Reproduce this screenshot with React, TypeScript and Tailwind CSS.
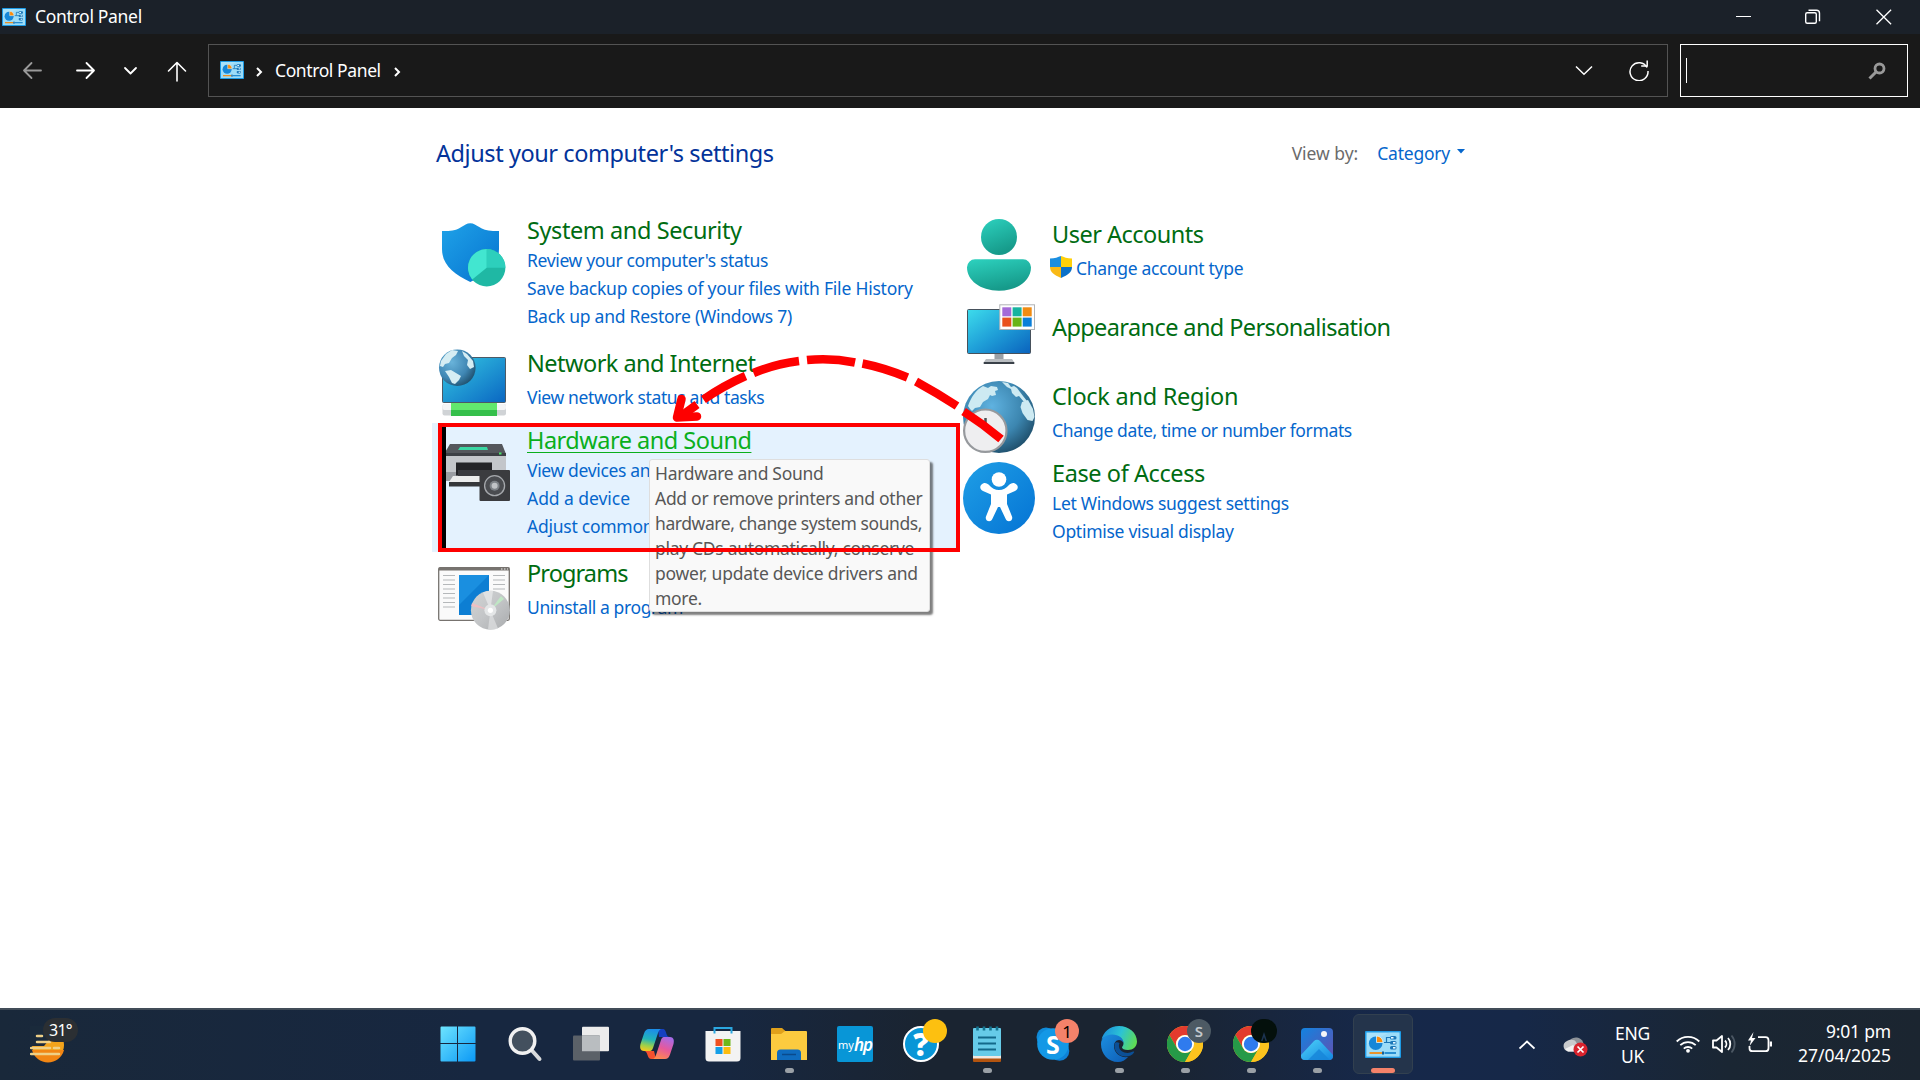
import React from 'react';
import clsx from 'clsx';

interface IconProps {
  className?: string;
}

interface Link {
  label: string;
  className: string;
  shield?: boolean;
}

interface Category {
  title: string;
  titleClass: string;
  icon: React.FC<IconProps>;
  rowClass: string;
  iconClass: string;
  textClass: string;
  linksClass: string;
  links: Link[];
  hovered?: boolean;
}

/* ---------- Icons ---------- */

const ControlPanelIcon: React.FC<IconProps> = ({ className }) => (
  <svg viewBox="0 0 36 27" className={className}>
    <rect width="36" height="27" rx="1" fill="#1d9be6" />
    <rect x="1.5" y="1.5" width="33" height="24" fill="#a9e2fa" />
    <path d="M1.5 25.5V14L24 1.5h10.500V25.500z" fill="#8fd6f6" opacity=".5" />
    <circle cx="10.700" cy="12.300" r="6.800" fill="#1787d8" />
    <path d="M11.500 11.500V5a6.500 6.500 0 0 1 6.500 6.500z" fill="#fb8c0b" stroke="#d9f2fd" strokeWidth=".8" />
    <path d="M19 11.500h2.500V6.500H26M21.500 11.500H26" stroke="#1b77b8" strokeWidth="1.200" fill="none" />
    <rect x="25" y="5" width="6.500" height="3.600" rx="1.600" fill="#1b77b8" />
    <rect x="25" y="10" width="6.500" height="3.600" rx="1.600" fill="#1b77b8" />
    <rect x="25" y="15" width="6.500" height="3.600" rx="1.600" fill="#1b77b8" />
    <rect x="26" y="6" width="2.500" height="1.600" fill="#e8f8ff" />
    <rect x="28" y="11" width="2.500" height="1.600" fill="#e8f8ff" />
    <rect x="28" y="16" width="2.500" height="1.600" fill="#e8f8ff" />
    <path d="M4.500 22H17" stroke="#f28a12" strokeWidth="1.800" />
    <path d="M19.500 22H31" stroke="#1b86cf" strokeWidth="1.800" />
    <rect x="17" y="20.500" width="2" height="3" fill="#0f5f9c" />
  </svg>
);

const SecurityIcon: React.FC<IconProps> = ({ className }) => (
  <svg viewBox="0 0 72 72" className={className}>
    <defs>
      <linearGradient id="shieldBlue" x1="0" y1="0" x2="1" y2="1">
        <stop offset="0" stopColor="#1fa2e8" />
        <stop offset="1" stopColor="#0672cf" />
      </linearGradient>
    </defs>
    <path d="M32.300 4.300c-7 0-9.500 7.700-22 7.700H4v18c0 16 12 25 28.300 33C49 55 61 46 61 30V12h-6c-13 0-16-7.700-22.700-7.700z" fill="url(#shieldBlue)" />
    <circle cx="48.700" cy="48.700" r="18.700" fill="#1fb8a4" />
    <path d="M48.700 48.700V30a18.700 18.700 0 0 1 18.700 18.700z" fill="#2dcfbc" />
    <path d="M48.700 48.700V30a18.700 18.700 0 0 0-14.500 30.500z" fill="#42e6d0" />
  </svg>
);

const Continents: React.FC = () => (
  <g fill="#cdeaf2">
    <path d="M5 25C8 16 13 9 20 5l5 2 3-2 6 1 1 3-3 1 1 4-4 1-2-1-2 4-5 3-3 5-5 1-3 3-2-2z" />
    <path d="M9 32l4-1 1 2-3 2z" />
    <path d="M39 1l6 1 3 4 3-1 3 2 6 8 4 5-3 1-5-6-3 1-4-4-1-4-4-2z" />
    <path d="M59 21l6-2 5 9 1.500 8-2 4-5-1-5-7-2-6z" />
  </g>
);

const NetworkIcon: React.FC<IconProps> = ({ className }) => (
  <svg viewBox="0 0 72 72" className={className}>
    <defs>
      <linearGradient id="screenBlue" x1="0" y1="0" x2="1" y2="1">
        <stop offset="0" stopColor="#35c9e3" />
        <stop offset="1" stopColor="#0a66c2" />
      </linearGradient>
      <radialGradient id="globeSmall" cx=".35" cy=".35" r=".75">
        <stop offset="0" stopColor="#69b3da" />
        <stop offset=".6" stopColor="#3f86b3" />
        <stop offset="1" stopColor="#1c4a66" />
      </radialGradient>
    </defs>
    <rect x="4.500" y="10.500" width="63" height="45" rx="1" fill="url(#screenBlue)" stroke="#4d5a66" />
    <rect x="4.500" y="57" width="63.500" height="11.500" rx="2" fill="#d0d3d6" />
    <rect x="4.500" y="57" width="63.500" height="6" rx="2" fill="#f4f5f6" />
    <rect x="13" y="56" width="46" height="13" fill="#35bf4b" />
    <rect x="13" y="56" width="46" height="7" fill="#62e86e" />
    <circle cx="19.300" cy="20.700" r="18.300" fill="url(#globeSmall)" />
    <g fill="#d5edf3">
      <path d="M3 14l5-7 6-4 6 1-2 4-4 3-3 5-4 1-2 3-3-1z" />
      <path d="M7 24l6-1 5 3 5 3-2 4-4 4-3-1-3-6z" />
      <path d="M24 4l5 3 6 7 1 6-4 2-3-4 1-5-4-4z" />
    </g>
  </svg>
);

const PrinterIcon: React.FC<IconProps> = ({ className }) => (
  <svg viewBox="0 0 72 72" className={className}>
    <path d="M12 8h52l4 10v2H6v-2z" fill="#54575c" />
    <path d="M22 11h27l1 3H20z" fill="#3ad6a3" />
    <path d="M6 17h62v3H6z" fill="#3d4045" />
    <rect x="61" y="16.500" width="2.500" height="2" fill="#4ae26a" />
    <path d="M6 20h62v23a2 2 0 0 1-2 2H8a2 2 0 0 1-2-2z" fill="#c3c6ca" />
    <path d="M6 36h62v9H6z" fill="#9a9da2" />
    <rect x="18" y="26.500" width="36" height="13" fill="#232427" />
    <rect x="20" y="34" width="32" height="6" fill="#3a3b3f" />
    <path d="M15 40h35v6H11z" fill="#eceded" />
    <rect x="11" y="46" width="32" height="4.500" fill="#35373a" />
    <rect x="41.500" y="34" width="30.500" height="31" rx="1" fill="#3b3c3f" />
    <circle cx="56.600" cy="49.700" r="10" fill="#4a4c50" stroke="#a5a8ac" strokeWidth="1.300" />
    <circle cx="56.600" cy="49.700" r="5" fill="#7d8287" />
    <circle cx="56.600" cy="49.700" r="3" fill="#c0c3c6" />
  </svg>
);

const ProgramsIcon: React.FC<IconProps> = ({ className }) => (
  <svg viewBox="0 0 72 72" className={className}>
    <defs>
      <linearGradient id="disc" x1="0" y1="0" x2="1" y2="1">
        <stop offset="0" stopColor="#d2d4d5" />
        <stop offset=".5" stopColor="#c3c5c7" />
        <stop offset="1" stopColor="#a9abad" />
      </linearGradient>
    </defs>
    <rect x=".7" y="5.700" width="70.600" height="52.600" rx="1.500" fill="#fafafa" stroke="#77736f" strokeWidth="1.300" />
    <path d="M.7 7h70.600" stroke="#77736f" strokeWidth="3" />
    <path d="M63 7h1.500M66 7h1.500M69 7h1" stroke="#eee" strokeWidth="1.200" />
    <path
      d="M5 13.500h12M5 18h12M5 22.500h12M5 27h12M5 31.500h12M5 36h12M5 40.500h12M5 45h12M55 13.500h12M55 18h12M55 22.500h12M55 27h12"
      stroke="#b5b8ba"
    />
    <rect x="21" y="13" width="30" height="40" fill="#0d7ed3" />
    <path d="M21 13h30L21 43z" fill="#1a8fe0" />
    <circle cx="52.400" cy="48.300" r="19.500" fill="url(#disc)" />
    <path d="M52.400 48.300L34 41l-.8 3z" fill="#eebfc3" />
    <path d="M52.400 48.300L63 34l3 3z" fill="#bfe6c4" />
    <path d="M52.400 48.300L45 30.500a19.500 19.500 0 0 1 10-1.500z" fill="#e6e7e8" opacity=".8" />
    <path d="M52.400 48.300L50 67.500a19.500 19.500 0 0 0 10-1z" fill="#e0e1e2" opacity=".7" />
    <circle cx="52.400" cy="48.300" r="6" fill="#e4e6e7" />
    <circle cx="52.400" cy="48.300" r="2.600" fill="#fff" />
  </svg>
);

const UserIcon: React.FC<IconProps> = ({ className }) => (
  <svg viewBox="0 0 72 72" className={className}>
    <defs>
      <linearGradient id="userTeal" x1="0" y1="0" x2=".4" y2="1">
        <stop offset="0" stopColor="#2dd2bf" />
        <stop offset="1" stopColor="#169a8a" />
      </linearGradient>
    </defs>
    <circle cx="36" cy="18" r="18" fill="url(#userTeal)" />
    <path d="M12 40.300h48a8 8 0 0 1 8 8c0 13-13 23.400-32 23.400S4 61.300 4 48.300a8 8 0 0 1 8-8z" fill="url(#userTeal)" />
  </svg>
);

const AppearanceIcon: React.FC<IconProps> = ({ className }) => (
  <svg viewBox="0 0 72 72" className={className}>
    <defs>
      <linearGradient id="screenCyan" x1="0" y1="0" x2="1" y2="1">
        <stop offset="0" stopColor="#3ddcec" />
        <stop offset=".5" stopColor="#1f9fd8" />
        <stop offset="1" stopColor="#0a62bd" />
      </linearGradient>
    </defs>
    <rect x="31.500" y="56" width="9" height="7" fill="#9aa0a6" />
    <path d="M23 61h26l2 3H21z" fill="#b9bdc1" />
    <rect x="20.700" y="64" width="30.600" height="2" fill="#3a4149" />
    <rect x="4.500" y="11.500" width="63" height="44" rx="1" fill="url(#screenCyan)" stroke="#46515c" />
    <rect x="36.800" y="6.800" width="34.700" height="24.700" fill="#fff" stroke="#b0b3b6" />
    <rect x="39.300" y="9.300" width="9" height="9" fill="#a46ad8" />
    <rect x="49.600" y="9.300" width="9" height="9" fill="#17b3a0" />
    <rect x="59.700" y="9.300" width="9" height="9" fill="#f08b12" />
    <rect x="39.300" y="19.600" width="9" height="9" fill="#e9511d" />
    <rect x="49.600" y="19.600" width="9" height="9" fill="#69b418" />
    <rect x="59.700" y="19.600" width="9" height="9" fill="#0a7fd9" />
  </svg>
);

const ClockIcon: React.FC<IconProps> = ({ className }) => (
  <svg viewBox="0 0 72 72" className={className}>
    <defs>
      <radialGradient id="globeLarge" cx=".4" cy=".35" r=".7">
        <stop offset="0" stopColor="#5fb2e0" />
        <stop offset=".6" stopColor="#3c86b0" />
        <stop offset="1" stopColor="#1d4c68" />
      </radialGradient>
    </defs>
    <circle cx="36" cy="36" r="36" fill="url(#globeLarge)" />
    <Continents />
    <circle cx="22.300" cy="49.700" r="21.200" fill="#eeeef0" stroke="#96999d" strokeWidth="2.200" />
    <path d="M22.500 37v12" stroke="#4c4f52" strokeWidth="2.500" />
  </svg>
);

const EaseIcon: React.FC<IconProps> = ({ className }) => (
  <svg viewBox="0 0 72 72" className={className}>
    <defs>
      <linearGradient id="easeBlue" x1="0" y1="0" x2="1" y2="1">
        <stop offset="0" stopColor="#1f9fe6" />
        <stop offset="1" stopColor="#0473d4" />
      </linearGradient>
    </defs>
    <circle cx="36" cy="36" r="36" fill="url(#easeBlue)" />
    <circle cx="36" cy="17.500" r="7.300" fill="#fff" />
    <path
      d="M20.500 21.200c2-.8 3.500.300 5 1.200C29 26 32 28 36 28s7-2 10.500-5.600c1.500-.9 3-2 5-1.200 4 1.500 4.500 6 .5 7.800L44 32.500V42l5 12.500c1.600 4.200-4.400 6.700-6.300 2.500L37 45h-2l-5.700 12c-1.900 4.200-7.900 1.700-6.300-2.500L28 42v-9.500L20 29c-4-1.800-3.500-6.300.5-7.800z"
      fill="#fff"
    />
  </svg>
);

const UacShield: React.FC<IconProps> = ({ className }) => (
  <svg viewBox="0 0 22 22" className={className}>
    <path d="M11 0v11H0V2.500C5 2.500 8 1 11 0z" fill="#1b8ee0" />
    <path d="M11 0v11h11V2.500C17 2.500 14 1 11 0z" fill="#ffd00a" />
    <path d="M0 11h11v11C4 19 0 16 0 11z" fill="#f9b916" />
    <path d="M22 11H11v11c7-3 11-6 11-11z" fill="#0c71c9" />
  </svg>
);

/* ---------- Data ---------- */

const leftColumn: Category[] = [
  {
    title: 'System and Security',
    titleClass: 'tracking-[-0.41px]',
    icon: SecurityIcon,
    rowClass: 'h-[133px]',
    iconClass: 'mt-1.5',
    textClass: 'mt-px',
    linksClass: '-mt-px',
    links: [
      { label: "Review your computer's status", className: 'tracking-[-0.35px]' },
      { label: 'Save backup copies of your files with File History', className: 'tracking-[-0.22px]' },
      { label: 'Back up and Restore (Windows 7)', className: 'tracking-[-0.25px]' },
    ],
  },
  {
    title: 'Network and Internet',
    titleClass: 'tracking-[-0.53px]',
    icon: NetworkIcon,
    rowClass: 'h-[77px]',
    iconClass: 'mt-px',
    textClass: 'mt-px',
    linksClass: 'mt-[3px]',
    links: [{ label: 'View network status and tasks', className: 'tracking-[-0.37px]' }],
  },
  {
    title: 'Hardware and Sound',
    titleClass: 'tracking-[-0.5px]',
    icon: PrinterIcon,
    rowClass: 'h-[129px] mb-1',
    iconClass: 'mt-[13px]',
    textClass: 'mt-px',
    linksClass: '-mt-px',
    hovered: true,
    links: [
      { label: 'View devices and printers', className: 'tracking-[-0.35px]' },
      { label: 'Add a device', className: 'tracking-[-0.05px]' },
      { label: 'Adjust commonly used mobility settings', className: 'tracking-[-0.25px]' },
    ],
  },
  {
    title: 'Programs',
    titleClass: 'tracking-[-0.9px]',
    icon: ProgramsIcon,
    rowClass: '',
    iconClass: 'mt-1.5',
    textClass: 'mt-px',
    linksClass: 'mt-[3px]',
    links: [{ label: 'Uninstall a program', className: 'tracking-[-0.4px]' }],
  },
];

const rightColumn: Category[] = [
  {
    title: 'User Accounts',
    titleClass: 'tracking-[-0.5px]',
    icon: UserIcon,
    rowClass: 'h-[81px] mt-1',
    iconClass: 'mt-0.5',
    textClass: 'mt-px',
    linksClass: 'mt-[3px]',
    links: [{ label: 'Change account type', className: 'tracking-[-0.32px]', shield: true }],
  },
  {
    title: 'Appearance and Personalisation',
    titleClass: 'tracking-[-0.6px]',
    icon: AppearanceIcon,
    rowClass: 'h-[81px]',
    iconClass: '',
    textClass: 'mt-[13px]',
    linksClass: '',
    links: [],
  },
  {
    title: 'Clock and Region',
    titleClass: 'tracking-[-0.26px]',
    icon: ClockIcon,
    rowClass: 'h-[77px]',
    iconClass: 'mt-0.5',
    textClass: 'mt-px',
    linksClass: 'mt-[3px]',
    links: [{ label: 'Change date, time or number formats', className: 'tracking-[-0.37px]' }],
  },
  {
    title: 'Ease of Access',
    titleClass: 'tracking-[-0.41px]',
    icon: EaseIcon,
    rowClass: '',
    iconClass: 'mt-1.5',
    textClass: 'mt-px',
    linksClass: '-mt-px',
    links: [
      { label: 'Let Windows suggest settings', className: 'tracking-[-0.27px]' },
      { label: 'Optimise visual display', className: 'tracking-[-0.28px]' },
    ],
  },
];

/* ---------- Window ---------- */

const TitleBar: React.FC = () => (
  <div className="flex h-[34px] items-center bg-[#1b2129] pl-0.5 text-white">
    <ControlPanelIcon className="h-[18px] w-6" />
    <span className="ml-[9px] text-[17.5px] leading-none tracking-[-0.31px]">Control Panel</span>
    <div className="ml-auto flex items-center">
      <svg viewBox="0 0 156 16" className="mr-[28px] h-4 w-[156px]" fill="none" stroke="#fff">
        <path d="M0 7.500h15" />
        <rect x="69.700" y="3.700" width="10.600" height="10.600" rx="1.500" strokeWidth="1.400" />
        <path d="M72.500 1.200h8a3 3 0 0 1 3 3v8" strokeWidth="1.400" />
        <path d="M140.500.7l14.600 14.600M155.100.7l-14.600 14.600" strokeWidth="1.300" />
      </svg>
    </div>
  </div>
);

const AddressBar: React.FC = () => (
  <div className="flex h-[74px] items-start bg-[#191919] pr-3">
    <svg viewBox="0 0 208 74" className="h-[74px] w-[208px]" fill="none" strokeLinecap="round" strokeLinejoin="round">
      <path d="M41 36.500H24M31.500 29l-7.500 7.500 7.500 7.500" stroke="#9a9a9a" strokeWidth="1.800" />
      <path d="M77 36.500h17M86.500 29l7.500 7.500-7.500 7.500" stroke="#fff" strokeWidth="1.800" />
      <path d="M125 34l5.500 5.500L136 34" stroke="#fff" strokeWidth="1.800" />
      <path d="M177 47V29M168.500 37l8.500-8.500 8.500 8.500" stroke="#fff" strokeWidth="1.600" />
    </svg>
    <div className="mt-2.5 flex h-[53px] w-[1460px] items-center border border-[#535353] pl-[11px] pr-[18px] text-white">
      <ControlPanelIcon className="-mt-px h-[18px] w-6" />
      <svg viewBox="0 0 7 10" className="ml-3 mt-0.5 h-2.5 w-[7px]" fill="none" stroke="#fff" strokeWidth="2">
        <path d="M1 1l4 4-4 4" />
      </svg>
      <span className="mt-px ml-[12px] text-[17.5px] leading-none tracking-[-0.4px]">Control Panel</span>
      <svg viewBox="0 0 7 10" className="ml-[13px] mt-0.5 h-2.5 w-[7px]" fill="none" stroke="#fff" strokeWidth="2">
        <path d="M1 1l4 4-4 4" />
      </svg>
      <svg viewBox="0 0 74 22" className="-mt-0.5 ml-auto h-[22px] w-[74px]" fill="none" stroke="#fff" strokeWidth="1.500">
        <path d="M1 7.500l8 7.700 8-7.700" />
        <path d="M72 8.500A9 9 0 1 0 73 12" />
        <path d="M72.200 1.500V7h-6" />
      </svg>
    </div>
    <div className="ml-3 mt-2.5 flex h-[53px] flex-1 items-center border border-white pl-[5px] pr-[21px]">
      <div className="h-[25px] w-px bg-white" />
      <svg viewBox="0 0 18 18" className="ml-auto mt-px h-[18px] w-[18px]" fill="none" stroke="#999">
        <circle cx="11.500" cy="6.500" r="4.500" strokeWidth="2.800" />
        <path d="M8 10l-6.500 6.500" strokeWidth="3" />
      </svg>
    </div>
  </div>
);

const CategoryRow: React.FC<{ category: Category }> = ({ category }) => {
  const Icon = category.icon;
  return (
    <div className={clsx('flex pl-1.5', category.rowClass, category.hovered && 'bg-[#e4f2fe]')}>
      <Icon className={clsx('h-[72px] w-[72px] shrink-0', category.iconClass)} />
      <div className={clsx('ml-[17px] whitespace-nowrap', category.textClass)}>
        <h2
          className={clsx(
            'text-[23.5px] leading-[33px]',
            category.titleClass,
            category.hovered ? 'text-[#0aaf1c] underline decoration-1 underline-offset-[3px]' : 'text-[#006c12]'
          )}
        >
          {category.title}
        </h2>
        <ul className={category.linksClass}>
          {category.links.map((link) => (
            <li key={link.label} className="flex h-7 items-center text-[17.5px] leading-7 text-[#0566cc]">
              {link.shield && <UacShield className="-ml-0.5 mr-[4px] -mt-0.5 h-[22px] w-[22px]" />}
              <span className={link.className}>{link.label}</span>
            </li>
          ))}
        </ul>
      </div>
    </div>
  );
};

const Tooltip: React.FC = () => (
  <div className="absolute left-[649px] top-[459px] h-[153px] w-[281px] whitespace-nowrap rounded-[3px] border border-[#dedede] bg-[#f9f9f9] pl-[5px] pt-px text-[17.5px] leading-[25px] tracking-[-0.3px] text-[#575757] shadow-[3px_3px_2px_rgba(0,0,0,0.5)]">
    <div>Hardware and Sound</div>
    <div className="tracking-[-0.29px]">Add or remove printers and other</div>
    <div className="tracking-[-0.42px]">hardware, change system sounds,</div>
    <div className="tracking-[-0.3px]">play CDs automatically, conserve</div>
    <div className="tracking-[-0.24px]">power, update device drivers and</div>
    <div>more.</div>
  </div>
);

// Red frame and dashed arrow drawn over the hovered category
const Annotation: React.FC = () => (
  <>
    <div className="absolute left-[438px] top-[423px] h-[129px] w-[522px] border-4 border-[#fe0000]">
      <div className="h-full w-1 bg-black" />
    </div>
    <svg viewBox="660 340 360 110" className="absolute left-[660px] top-[340px] h-[110px] w-[360px]" fill="none" stroke="#fe0000" strokeWidth="8.500">
      <path d="M1001 439Q983 424 963.600 411.500" />
      <path d="M957 406Q937 393 916 381.500" />
      <path d="M907.500 377.500Q885 368 862.500 363.500" />
      <path d="M855 362.500Q831 357.500 807 360" />
      <path d="M799 361Q775 364 753.500 373" />
      <path d="M745.500 376Q723 386 703.500 399.500" />
      <path d="M697 404.500L680 417" />
      <path d="M681.500 399L677 417.500 697 416.500" strokeLinecap="round" strokeLinejoin="round" />
    </svg>
  </>
);

const Content: React.FC = () => (
  <main className="h-[900px] bg-white pl-[432px]">
    <div className="flex h-[105px] items-start pt-[27px]">
      <h1 className="pl-1 text-[23.5px] leading-[36px] tracking-[-0.43px] text-[#03339a]">Adjust your computer&#39;s settings</h1>
      <div className="ml-auto mr-[455px] mt-1 flex items-center text-[17.5px] leading-7">
        <span className="tracking-[-0.03px] text-[#6b6b6b]">View by:</span>
        <span className="ml-[19px] tracking-[-0.23px] text-[#0566cc]">Category</span>
        <svg viewBox="0 0 8 5" className="-mt-1 ml-[7px] h-[5px] w-2">
          <path d="M0 0h8L4 4.500z" fill="#0566cc" />
        </svg>
      </div>
    </div>
    <div className="flex">
      <div className="w-[525px]">
        {leftColumn.map((c) => (
          <CategoryRow key={c.title} category={c} />
        ))}
      </div>
      <div className="w-[525px]">
        {rightColumn.map((c) => (
          <CategoryRow key={c.title} category={c} />
        ))}
      </div>
    </div>
  </main>
);

/* ---------- Taskbar ---------- */

const StartIcon: React.FC = () => (
  <svg viewBox="0 0 36 36" className="-ml-[3px] h-9 w-9">
    <defs>
      <linearGradient id="start" gradientUnits="userSpaceOnUse" x1="0" y1="0" x2="36" y2="36">
        <stop offset="0" stopColor="#6fe6ff" />
        <stop offset="1" stopColor="#0a97f5" />
      </linearGradient>
    </defs>
    <path d="M1.500.5H17V17H.5V1.500a1 1 0 0 1 1-1zM18 .5h16.500a1 1 0 0 1 1 1V17H18zM.5 18H17v17.500H1.500a1 1 0 0 1-1-1zM18 18h17.500v16.500a1 1 0 0 1-1 1H18z" fill="url(#start)" />
  </svg>
);

const SearchIcon: React.FC = () => (
  <svg viewBox="0 0 36 36" className="h-9 w-9">
    <path d="M24.500 24l8 9" stroke="#d8dadc" strokeWidth="4" strokeLinecap="round" />
    <circle cx="15.500" cy="15" r="12.300" fill="#43505e" stroke="#f1f1f1" strokeWidth="3.400" />
  </svg>
);

const TaskViewIcon: React.FC = () => (
  <svg viewBox="0 0 36 36" className="h-9 w-9">
    <rect x="9" y=".7" width="27" height="24.500" rx="1" fill="#ececec" />
    <rect x="0" y="9.500" width="27" height="25" rx="1" fill="#5b6168" />
    <path d="M9 9.500h17a1 1 0 0 1 1 1v14.700H9z" fill="#b9bdc0" />
  </svg>
);

const CopilotIcon: React.FC = () => (
  <svg viewBox="0 0 36 36" className="h-9 w-9">
    <defs>
      <linearGradient id="copA" x1=".4" y1="0" x2=".2" y2="1">
        <stop offset="0" stopColor="#1c8ee8" />
        <stop offset=".45" stopColor="#22b5b8" />
        <stop offset=".75" stopColor="#9ed04a" />
        <stop offset="1" stopColor="#fbc81b" />
      </linearGradient>
      <linearGradient id="copB" x1=".7" y1="0" x2=".3" y2="1">
        <stop offset="0" stopColor="#a66be8" />
        <stop offset=".5" stopColor="#e5599d" />
        <stop offset="1" stopColor="#ff8a4c" />
      </linearGradient>
    </defs>
    <path d="M19 3h4.500c2.500 0 3 1.500 4 5 .6 2 1.500 3 3.500 3H20z" fill="#1640c0" />
    <path d="M17 33h-4.500c-2.500 0-3-1.500-4-4-.6-2-1.500-4-3.500-4h10z" fill="#f4502e" />
    <path d="M10 3h13c-2.500 0-3.500 2-4.500 5.500L14 22c-.8 2.500-2 3-4 3H5c-3.500 0-4.500-3-3.500-7L5 7.500C6 4.500 7.500 3 10 3z" fill="url(#copA)" />
    <path d="M26 33H13c2.500 0 3.500-2 4.500-5.500L22 14c.8-2.500 2-3 4-3h5c3.500 0 4.500 3 3.500 7L31 28.500c-1 3-2.500 4.500-5 4.500z" fill="url(#copB)" />
  </svg>
);

const StoreIcon: React.FC = () => (
  <svg viewBox="0 0 36 36" className="h-9 w-9">
    <path d="M.5 5h35V32a3.500 3.500 0 0 1-3.500 3.500H4A3.500 3.500 0 0 1 .5 32z" fill="#f3f3f3" />
    <path d="M9.500 7.500V2h17v5.500" stroke="#2ba7e0" strokeWidth="2" fill="none" />
    <rect x="10.500" y="13" width="7" height="7" fill="#ee5122" />
    <rect x="18.500" y="13" width="7" height="7" fill="#6db81b" />
    <rect x="10.500" y="21" width="7" height="7" fill="#149fe8" />
    <rect x="18.500" y="21" width="7" height="7" fill="#fcbc0f" />
  </svg>
);

const ExplorerIcon: React.FC = () => (
  <svg viewBox="0 0 36 36" className="h-9 w-9">
    <path d="M0 3a1 1 0 0 1 1-1h10l4 3.500V10H0z" fill="#e0a11b" />
    <path d="M0 8h10l4-3h21a1 1 0 0 1 1 1v28H0z" fill="#fccb3f" />
    <path d="M6 34v-7a3.500 3.500 0 0 1 3.500-3.500h17A3.500 3.500 0 0 1 30 27v7z" fill="#0f6cbf" />
    <path d="M11 28.500h14" stroke="#0a4a8c" strokeWidth="1.500" />
  </svg>
);

const MyHpIcon: React.FC = () => (
  <div className="flex h-9 w-9 items-center justify-center rounded-[2px] bg-[#0896d7] text-white">
    <span className="text-[11px] leading-none">my</span>
    <span className="text-[17px] font-semibold italic leading-none tracking-[-1px]">hp</span>
  </div>
);

const HelpIcon: React.FC = () => (
  <div className="flex h-9 w-9 items-center justify-center rounded-full border-2 border-white bg-[#0896d7] text-[31px] font-black leading-none text-white">
    ?
  </div>
);

const NotepadIcon: React.FC = () => (
  <svg viewBox="0 0 36 36" className="h-9 w-9">
    <rect x="4" y="29" width="28" height="7" rx="1" fill="#b3540f" />
    <rect x="4" y="28" width="28" height="4.500" fill="#f1e8e0" />
    <rect x="4" y="2" width="28" height="28" rx="1" fill="#66cbe8" />
    <path d="M9 11.500h18M9 17.500h18M9 23.500h18" stroke="#12698a" strokeWidth="2" />
    <path d="M8.500.500v4M15 .500v4M21.500.500v4M28 .500v4" stroke="#14748f" strokeWidth="2.600" />
  </svg>
);

const SkypeIcon: React.FC = () => (
  <div className="relative flex h-9 w-9 items-center justify-center">
    <svg viewBox="0 0 36 36" className="absolute h-9 w-9">
      <circle cx="11" cy="11" r="9.500" fill="#0f8ad8" />
      <circle cx="24.500" cy="25" r="9.800" fill="#0e82d8" />
      <circle cx="18" cy="18" r="15.800" fill="#1398e6" />
    </svg>
    <span className="relative text-[25px] font-bold leading-none text-white">S</span>
  </div>
);

const EdgeIcon: React.FC = () => (
  <svg viewBox="0 0 36 36" className="h-9 w-9">
    <defs>
      <linearGradient id="edgeTop" x1="0" y1=".3" x2="1" y2=".6">
        <stop offset="0" stopColor="#1b8fdd" />
        <stop offset=".5" stopColor="#2cc3d4" />
        <stop offset="1" stopColor="#5fdc52" />
      </linearGradient>
      <linearGradient id="edgeLow" x1="0" y1="0" x2="1" y2="1">
        <stop offset="0" stopColor="#1c8fe0" />
        <stop offset="1" stopColor="#0d5cb5" />
      </linearGradient>
    </defs>
    <path d="M.5 14C2 6 9 0 18 0c10 0 18 7 18 15.500 0 5-4 8.500-9 8.500-4 0-6-1.500-6-2.500s1.500-1.500 1.500-4C22.500 13 18 10 13 10 7 10 2 11 .5 14z" fill="url(#edgeTop)" />
    <path d="M0 18c0-6 5-9.500 11-9.500 7 0 11.500 4 11.500 8.500-1-2-2.500-3-4.500-3-3 0-5 3-5 6 0 7 6 12 14 11-2.500 3-6 5-10 5C7 36 0 28 0 18z" fill="url(#edgeLow)" />
    <path d="M13.500 18c-1 8 5 12.500 11 12.500 4 0 7-1.500 8.500-4 .5-1-.2-1.300-1-.9-7 3.400-13-.6-13.700-3.600-.5-2-.5-3.500.2-5-2-1.500-4.500-1-5 1z" fill="#0b4f96" />
  </svg>
);

const ChromeIcon: React.FC = () => (
  <svg viewBox="0 0 36 36" className="h-9 w-9">
    <circle cx="18" cy="18" r="18" fill="#fcc31e" />
    <path d="M2.400 9A18 18 0 0 1 33.600 9H18a9 9 0 0 0-7.800 13.500z" fill="#e33b2e" />
    <path d="M2.400 9A18 18 0 0 0 18 36l7.800-13.500A9 9 0 0 1 10.200 22.500z" fill="#269a48" />
    <path d="M18 9h15.600A18 18 0 0 1 18 36l7.800-13.500A9 9 0 0 0 18 9z" fill="#fcc31e" />
    <circle cx="18" cy="18" r="9" fill="#fff" />
    <circle cx="18" cy="18" r="7.200" fill="#2f7bee" />
  </svg>
);

const PhotosIcon: React.FC = () => (
  <svg viewBox="0 0 36 36" className="h-9 w-9">
    <defs>
      <linearGradient id="photoSky" x1="0" y1="0" x2="1" y2="1">
        <stop offset="0" stopColor="#1283e0" />
        <stop offset="1" stopColor="#6350b0" />
      </linearGradient>
      <linearGradient id="photoHill" x1="0" y1="0" x2="1" y2="1">
        <stop offset="0" stopColor="#4ed3fa" />
        <stop offset="1" stopColor="#1487e0" />
      </linearGradient>
    </defs>
    <rect x="2" y="2" width="32" height="32" rx="4" fill="url(#photoSky)" />
    <path d="M2 29l13-14a4 4 0 0 1 6 0l13 14v1a4 4 0 0 1-4 4H6a4 4 0 0 1-4-4z" fill="url(#photoHill)" />
    <path d="M9 34l11-11 11 11z" fill="#1684d8" opacity=".8" />
    <circle cx="25" cy="8" r="3" fill="#f4f6f8" />
  </svg>
);

const apps: { name: string; icon: React.ReactNode; running?: boolean; active?: boolean; badge?: React.ReactNode; badgeClass?: string }[] = [
  { name: 'start', icon: <StartIcon /> },
  { name: 'search', icon: <SearchIcon /> },
  { name: 'taskview', icon: <TaskViewIcon /> },
  { name: 'copilot', icon: <CopilotIcon /> },
  { name: 'store', icon: <StoreIcon /> },
  { name: 'explorer', icon: <ExplorerIcon />, running: true },
  { name: 'myhp', icon: <MyHpIcon /> },
  { name: 'help', icon: <HelpIcon />, badge: '', badgeClass: 'bg-[#fdc010]' },
  { name: 'notepad', icon: <NotepadIcon />, running: true },
  { name: 'skype', icon: <SkypeIcon />, badge: '1', badgeClass: 'bg-[#f4826a] text-black text-[17px]' },
  { name: 'edge', icon: <EdgeIcon />, running: true },
  { name: 'chrome', icon: <ChromeIcon />, running: true, badge: 'S', badgeClass: 'bg-[#4d5a64] text-[#c3c8cc] text-[15px] font-semibold' },
  {
    name: 'chrome-2',
    icon: <ChromeIcon />,
    running: true,
    badge: (
      <svg viewBox="0 0 26 24" className="h-6 w-[26px] shrink-0">
        <path d="M13 13l-3 9h1.500l1.500-4 1.500 4H16z" fill="#1c3350" />
      </svg>
    ),
    badgeClass: 'w-[26px] bg-[#04100c]',
  },
  { name: 'photos', icon: <PhotosIcon />, running: true },
  { name: 'control-panel', icon: <ControlPanelIcon className="h-[27px] w-9" />, active: true },
];

const Weather: React.FC = () => (
  <div className="relative ml-[30px] h-10 w-12">
    <svg viewBox="0 0 48 44" className="absolute left-0 -top-0.5 h-11 w-12">
      <circle cx="18" cy="22" r="16" fill="#f2a31b" />
      <path d="M2 27h32a16.500 16.500 0 0 1-32 0z" fill="#f28613" />
      <path d="M0 3h20v13l-6 7H0z" fill="#1a2a3b" />
      <path d="M5 26a8 5 0 0 1 12 0z" fill="#8d7f74" />
      <path d="M7 13h5M7 19h13M1 25h19M24 25h5M1 31h28" stroke="#eed087" strokeWidth="2.500" strokeLinecap="round" />
    </svg>
    <span className="absolute -top-[7px] left-[13px] flex h-6 w-[35px] items-center justify-center rounded-full bg-[#2b2f33] text-[16px] leading-none tracking-[-0.8px] text-white">
      31°
    </span>
  </div>
);

const Tray: React.FC = () => (
  <div className="ml-auto flex h-full items-center pb-px pr-[29px] text-[17.5px] tracking-[-0.2px] text-white">
    <svg viewBox="0 0 16 10" className="h-2.5 w-4" fill="none" stroke="#fff" strokeWidth="1.800">
      <path d="M.5 8.500L8 1.500l7.500 7" />
    </svg>
    <svg viewBox="0 0 26 22" className="ml-[27px] mt-0.5 h-[22px] w-[26px]">
      <path d="M8 5a8 8 0 0 1 13 2l2 9H10z" fill="#8d9298" />
      <path d="M6 16.500A5.500 5.500 0 0 1 5 6c3-2 8-1.500 9 1l5 9.500z" fill="#c9cbcd" />
      <path d="M3 14l8-4 6 6.500H6z" fill="#f2f2f2" />
      <circle cx="18.500" cy="14.500" r="7" fill="#d9232d" />
      <path d="M15.500 11.500l6 6M21.500 11.500l-6 6" stroke="#fff" strokeWidth="1.700" />
    </svg>
    <div className="ml-[26px] w-[37px] text-center leading-[23px]">
      <div>ENG</div>
      <div>UK</div>
    </div>
    <svg viewBox="0 0 96 24" className="-mt-px ml-[25px] h-6 w-24" fill="none" stroke="#fff" strokeWidth="1.800">
      <path d="M.7 9.500a16 16 0 0 1 22.600 0M4.300 13.200a11 11 0 0 1 15.400 0M7.800 16.700a6 6 0 0 1 8.400 0" />
      <circle cx="12" cy="18.800" r="1.900" fill="#fff" stroke="none" />
      <path d="M37 8.500h3.500l5.500-4.500v16l-5.500-4.500H37z" strokeLinejoin="round" />
      <path d="M49 8.500a5 5 0 0 1 0 7M52 6a9 9 0 0 1 0 12" />
      <path d="M55.500 3.500a13 13 0 0 1 0 17" stroke="#4b5763" />
      <path d="M82 5.200h7.500a3 3 0 0 1 3 3v8a3 3 0 0 1-3 3h-13a3 3 0 0 1-3-3V14" />
      <path d="M95 9.500v5" strokeWidth="2.500" />
      <path d="M77.500 0L72 8.500h3L73.500 14l6-8H76z" fill="#fff" stroke="none" />
    </svg>
    <div className="-mt-0.5 ml-[25px] w-[94px] text-right leading-[23.5px]">
      <div>9:01 pm</div>
      <div className="tracking-[0px]">27/04/2025</div>
    </div>
  </div>
);

const Taskbar: React.FC = () => (
  <footer className="flex h-[72px] items-center border-t-2 border-[#414c58] bg-[linear-gradient(90deg,#19283a_0%,#172740_25%,#172740_38%,#1a2431_48%,#1a2431_60%,#16284a_72%,#162848_79%,#1a2633_90%,#1b2530_100%)]">
    <Weather />
    <div className="-mt-0.5 ml-[351px] flex gap-1.5">
      {apps.map((app) => (
        <div
          key={app.name}
          className={clsx(
            'relative flex h-[60px] w-[60px] items-center justify-center rounded-md',
            app.active && 'border border-[#32404f] bg-[#24344b]'
          )}
        >
          {app.icon}
          {app.badge !== undefined && (
            <span
              className={clsx(
                'absolute right-[4px] top-[5px] flex h-6 min-w-6 items-center justify-center overflow-hidden rounded-full leading-none',
                app.badgeClass
              )}
            >
              {app.badge}
            </span>
          )}
          {app.running && <span className="absolute bottom-px left-[25.5px] h-[5px] w-[9px] rounded-full bg-[#9aa0a6]" />}
          {app.active && <span className="absolute bottom-0 left-[17px] h-[5px] w-6 rounded-full bg-[#f4826a]" />}
        </div>
      ))}
    </div>
    <Tray />
  </footer>
);

const App: React.FC = () => {
  return (
    <div className="relative h-[1080px] w-[1920px] overflow-hidden bg-white font-['Noto_Sans','Open_Sans',sans-serif]">
      <TitleBar />
      <AddressBar />
      <Content />
      <Tooltip />
      <Annotation />
      <Taskbar />
    </div>
  );
};

export default App;
